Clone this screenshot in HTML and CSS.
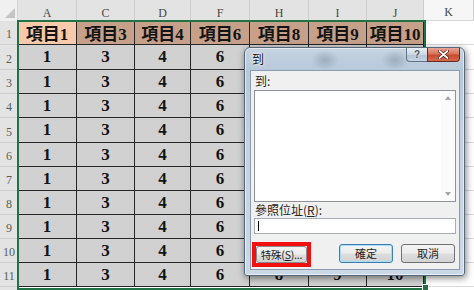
FILE: index.html
```html
<!DOCTYPE html>
<html lang="zh-Hant">
<head>
<meta charset="utf-8">
<title>到</title>
<link rel="stylesheet" href="styles.css">
</head>
<body>
<div class="sheet">
  <div class="corner"><svg class="tri" width="18" height="21" viewBox="0 0 18 21"><polygon points="15,8 15,18 5,18" fill="#c4c4c4"/></svg></div>
  <div class="ch">A</div><div class="ch">C</div><div class="ch">D</div><div class="ch">F</div><div class="ch">H</div><div class="ch">I</div><div class="ch">J</div><div class="ch k">K</div>

  <div class="rh">1</div><div class="c act">項目1</div><div class="c hd">項目3</div><div class="c hd">項目4</div><div class="c hd">項目6</div><div class="c hd">項目8</div><div class="c hd">項目9</div><div class="c hd">項目10</div><div class="c k"></div>
  <div class="rh">2</div><div class="c">1</div><div class="c">3</div><div class="c">4</div><div class="c">6</div><div class="c">8</div><div class="c">9</div><div class="c">10</div><div class="c k"></div>
  <div class="rh">3</div><div class="c">1</div><div class="c">3</div><div class="c">4</div><div class="c">6</div><div class="c">8</div><div class="c">9</div><div class="c">10</div><div class="c k"></div>
  <div class="rh">4</div><div class="c">1</div><div class="c">3</div><div class="c">4</div><div class="c">6</div><div class="c">8</div><div class="c">9</div><div class="c">10</div><div class="c k"></div>
  <div class="rh">5</div><div class="c">1</div><div class="c">3</div><div class="c">4</div><div class="c">6</div><div class="c">8</div><div class="c">9</div><div class="c">10</div><div class="c k"></div>
  <div class="rh">6</div><div class="c">1</div><div class="c">3</div><div class="c">4</div><div class="c">6</div><div class="c">8</div><div class="c">9</div><div class="c">10</div><div class="c k"></div>
  <div class="rh">7</div><div class="c">1</div><div class="c">3</div><div class="c">4</div><div class="c">6</div><div class="c">8</div><div class="c">9</div><div class="c">10</div><div class="c k"></div>
  <div class="rh">8</div><div class="c">1</div><div class="c">3</div><div class="c">4</div><div class="c">6</div><div class="c">8</div><div class="c">9</div><div class="c">10</div><div class="c k"></div>
  <div class="rh">9</div><div class="c">1</div><div class="c">3</div><div class="c">4</div><div class="c">6</div><div class="c">8</div><div class="c">9</div><div class="c">10</div><div class="c k"></div>
  <div class="rh">10</div><div class="c">1</div><div class="c">3</div><div class="c">4</div><div class="c">6</div><div class="c">8</div><div class="c">9</div><div class="c">10</div><div class="c k"></div>
  <div class="rh">11</div><div class="c">1</div><div class="c">3</div><div class="c">4</div><div class="c">6</div><div class="c">8</div><div class="c">9</div><div class="c">10</div><div class="c k"></div>
  <div class="rh tailh"></div><div class="tail"></div><div class="tail"></div><div class="tail"></div><div class="tail"></div><div class="tail"></div><div class="tail"></div><div class="tail"></div><div class="tail"></div>
</div>

<div class="selection"></div>
<div class="handle"></div>

<div class="dialog">
  <div class="titlebar">
    <span class="title">到</span>
    <div class="capbtns">
      <div class="cap help">?</div>
      <div class="cap close"><svg width="11" height="9" viewBox="0 0 11 9"><path d="M1.5 1 L9.5 8 M9.5 1 L1.5 8" stroke="#5a1a10" stroke-width="3.2" stroke-linecap="round"/><path d="M1.5 1 L9.5 8 M9.5 1 L1.5 8" stroke="#fff" stroke-width="1.7" stroke-linecap="round"/></svg></div>
    </div>
  </div>
  <div class="client">
    <div class="label">到:</div>
    <div class="listbox">
      <div class="scroll">
        <svg class="arrow" width="14" height="14" viewBox="0 0 14 14"><polygon points="4,9 10,9 7,5" fill="#a6a6a6"/></svg>
        <svg class="arrow" width="14" height="14" viewBox="0 0 14 14"><polygon points="4,5 10,5 7,9" fill="#a6a6a6"/></svg>
      </div>
    </div>
    <div class="label ref">參照位址(<u>R</u>):</div>
    <div class="input"><span class="caret"></span></div>
    <div class="btnrow">
      <div class="hl"><div class="btn special">特殊(<u>S</u>)...</div></div>
      <div class="btn def">確定</div>
      <div class="btn cancel">取消</div>
    </div>
  </div>
</div>
</body>
</html>
```
FILE: styles.css
```css
html, body {
  margin: 0;
  padding: 0;
  background: #fff;
  overflow: hidden;
}
body {
  position: relative;
  width: 474px;
  height: 290px;
}
.sheet {
  display: grid;
  grid-template-columns: 18px 59px 58px 56px 59px 59px 58px 57px 1fr;
  grid-template-rows: 21px 24px 25px 24px 24px 25px 24px 24px 24px 24px 24px 24px 1fr;
  width: 474px;
  height: 290px;
}
.sheet > div {
  box-sizing: border-box;
  min-width: 0;
  overflow: hidden;
}
.corner {
  background: #f0f0f0;
  border-right: 1px solid #d4d4d4;
  position: relative;
}
.tri { display: block; }
.ch {
  background: #e3e3e3;
  border-right: 1px solid #cdcdcd;
  color: #474747;
  font: 12px "Liberation Serif", serif;
  display: flex;
  align-items: center;
  justify-content: center;
  padding-top: 5px;
}
.ch.k {
  background: #f6f6f6;
  border-bottom: 1px solid #d6d6d6;
}
.rh {
  background: #e3e3e3;
  border-bottom: 1px solid #d0d0d0;
  color: #55625a;
  font: 12px "Liberation Serif", serif;
  display: flex;
  align-items: flex-end;
  justify-content: center;
  padding-bottom: 2px;
}
.rh.tailh { border-bottom: none; }
.c {
  background: #d1d1d1;
  border-right: 1px solid #262626;
  border-bottom: 1px solid #262626;
  display: flex;
  align-items: center;
  justify-content: center;
  font: bold 17px "Liberation Serif", "Noto Sans CJK TC", serif;
  color: #141414;
}
.c.hd { background: #c7a08a; }
.c.act { background: #f8c9aa; }
.c.k {
  background: #fff;
  border-right: none;
  border-bottom: 1px solid #dadada;
}
.tail { background: #fff; }

.selection {
  position: absolute;
  left: 17px;
  top: 20px;
  width: 409px;
  height: 270px;
  box-sizing: border-box;
  border: 2px solid #217346;
  pointer-events: none;
}
.handle {
  position: absolute;
  left: 422px;
  top: 284px;
  width: 5px;
  height: 5px;
  background: #217346;
  border: 1px solid #fff;
}

.dialog {
  position: absolute;
  left: 244px;
  top: 47px;
  width: 221px;
  height: 229px;
  box-sizing: border-box;
  border: 1px solid #56687c;
  border-radius: 6px 6px 3px 3px;
  padding: 0 4px 5px 5px;
  background:
    radial-gradient(ellipse 14px 10px at 80px 12px, rgba(90,110,130,.35), transparent),
    radial-gradient(ellipse 14px 10px at 150px 12px, rgba(90,110,130,.35), transparent),
    linear-gradient(180deg, #c6d4e2 0%, #b7c8d9 10%, #c4d2e0 40%, #cbd8e5 100%);
  box-shadow: inset 0 0 0 1px rgba(255,255,255,.55), 1px 2px 7px rgba(0,0,0,.5);
  display: flex;
  flex-direction: column;
  font-family: "Noto Sans CJK TC", "Liberation Sans", sans-serif;
}
.titlebar {
  height: 22px;
  flex: none;
  display: flex;
  justify-content: space-between;
  align-items: flex-start;
}
.title {
  padding: 4px 0 0 2px;
  font-size: 12px;
  line-height: 14px;
  color: #111;
  text-shadow: 0 0 4px #fff, 0 0 2px #fff;
}
.capbtns {
  display: flex;
}
.cap {
  height: 14px;
  box-sizing: border-box;
  display: flex;
  align-items: center;
  justify-content: center;
}
.help {
  width: 21px;
  border: 1px solid #5f7389;
  border-top: none;
  border-right: none;
  border-radius: 0 0 0 4px;
  background: linear-gradient(180deg, #e6eef6 0%, #cbd8e5 50%, #b3c4d6 51%, #c6d4e2 100%);
  color: #4a5563;
  font: bold 10px "Liberation Sans", sans-serif;
  text-shadow: 0 0 2px #fff;
}
.close {
  width: 33px;
  border: 1px solid #6a2a1e;
  border-top: none;
  border-radius: 0 0 4px 0;
  background: linear-gradient(180deg, #e9a594 0%, #d9735c 45%, #c74a2f 55%, #d46a4d 100%);
}
.close svg { display: block; }

.client {
  flex: 1;
  background: #f0f0f0;
  border: 1px solid #8b9cb0;
  display: flex;
  flex-direction: column;
}
.label {
  margin: 3px 0 0 4px;
  font-size: 12px;
  line-height: 14px;
  height: 14px;
  color: #262626;
}
.label.ref { margin-top: 1px; }
.listbox {
  margin: 2px 3px 0 3px;
  height: 112px;
  box-sizing: border-box;
  background: #fff;
  border: 1px solid #8f949c;
  display: flex;
  justify-content: flex-end;
}
.scroll {
  width: 14px;
  display: flex;
  flex-direction: column;
  justify-content: space-between;
  background: #fbfbfb;
}
.arrow { display: block; }
.input {
  margin: 1px 3px 0 3px;
  height: 16px;
  box-sizing: border-box;
  background: #fff;
  border: 1px solid #a9adb5;
  padding: 2px 0 0 3px;
}
.caret {
  display: block;
  width: 1px;
  height: 10px;
  background: #000;
}
.btnrow {
  margin-top: 8px;
  display: flex;
  align-items: flex-start;
  padding-right: 4px;
}
.hl {
  margin-left: 1px;
  border: 4px solid #f01010;
}
.btn {
  width: 54px;
  height: 19px;
  box-sizing: border-box;
  border: 1px solid #707070;
  border-radius: 3px;
  background: linear-gradient(180deg, #f4f4f4 0%, #ececec 48%, #dedede 52%, #d2d2d2 100%);
  font-size: 11px;
  line-height: 13px;
  color: #222;
  display: flex;
  align-items: center;
  justify-content: center;
  margin-top: 2px;
  white-space: nowrap;
}
.hl .btn {
  width: 51px;
  height: 17px;
  margin: 0;
  border-color: #8a8a8a;
}
.btn.special {
  font-size: 10.5px;
  letter-spacing: -0.2px;
}
.btn.def {
  margin-left: auto;
  border-color: #3c7fb1;
  box-shadow: inset 0 0 0 1px #a6dbf7;
}
.btn.cancel {
  margin-left: 8px;
}
u { text-decoration: underline; }
```
